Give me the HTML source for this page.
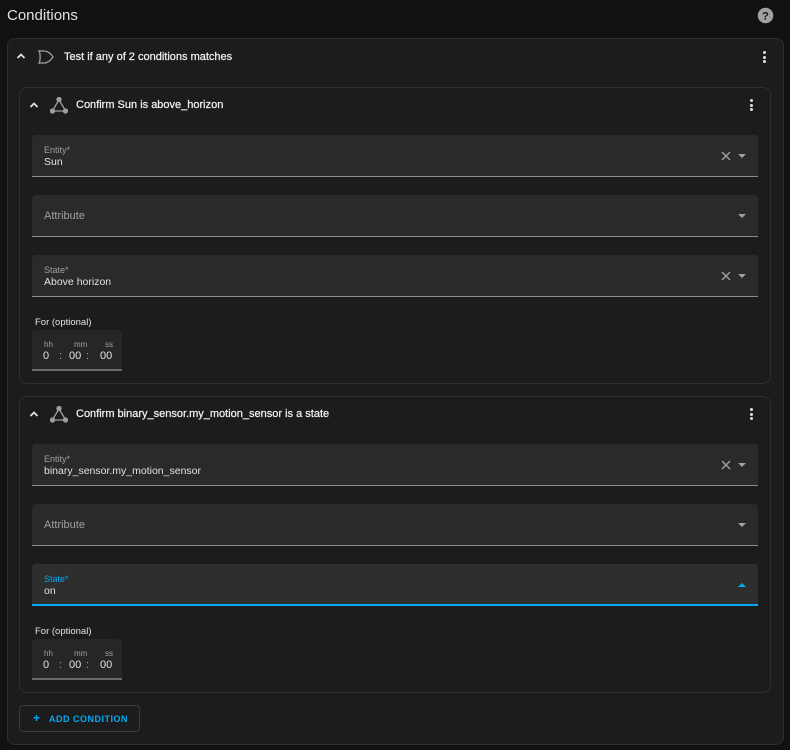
<!DOCTYPE html>
<html><head><meta charset="utf-8"><style>
*{box-sizing:border-box;margin:0;padding:0}
body{width:790px;height:750px;background:#111111;font-family:"Liberation Sans",sans-serif;color:#e1e1e1;position:relative;overflow:hidden}
.a{position:absolute}
.card{position:absolute;background:#1c1c1c;border:1px solid #2f2f2f;border-radius:8px}
.field{position:absolute;left:32px;width:726px;height:42px;background:#2a2a2a;border-radius:4px 4px 0 0;border-bottom:1px solid #8c8c8c}
.lbl{position:absolute;left:12px;top:10px;font-size:9px;color:#a0a0a0}
.val{position:absolute;left:12px;top:21px;font-size:10.5px;color:#e1e1e1}
.ph{position:absolute;left:12px;top:15px;font-size:11px;color:#a0a0a0}
.tri{position:absolute;right:12px;top:19px;width:0;height:0;border-left:4px solid transparent;border-right:4px solid transparent;border-top:4px solid #a0a0a0}
.x{position:absolute;right:27px;top:16px}
.title{position:absolute;font-size:11px;color:#f0f0f0;-webkit-text-stroke:0.25px #f0f0f0}
.dots{position:absolute;width:3px}
.dots i{display:block;width:3px;height:3px;background:#e1e1e1;border-radius:50%;margin-bottom:1.5px}
.dur{position:absolute;left:32px;width:90px;height:41px;background:#262626;border-bottom:2px solid #6a6a6a;border-radius:4px 4px 0 0}
.dur span{position:absolute}
.sm{font-size:8px;color:#a0a0a0;top:10px}
.big{font-size:11px;color:#e1e1e1;top:20px}
</style></head><body>
<div class="a" style="left:7px;top:7px;font-size:15px;color:#e1e1e1">Conditions</div>
<svg class="a" style="left:757px;top:7px" width="17" height="17" viewBox="0 0 24 24"><circle cx="12" cy="12" r="11" fill="#a0a0a0"/><text x="12" y="17.5" text-anchor="middle" font-family="Liberation Sans" font-weight="bold" font-size="16" fill="#111">?</text></svg>

<div class="card" style="left:7px;top:38px;width:777px;height:707px"></div>
<svg class="a" style="left:16px;top:52px" width="10" height="8" viewBox="0 0 10 8"><path d="M1.5 6L5 2.5 8.5 6" stroke="#e1e1e1" stroke-width="1.8" fill="none"/></svg>
<svg class="a" style="left:38px;top:50px" width="16" height="14" viewBox="0 0 16 14"><path d="M1 1h5c4 0 7 3 9 6-2 3-5 6-9 6H1c1.5-2 1.5-10 0-12z" stroke="#a0a0a0" stroke-width="1.3" fill="none"/></svg>
<div class="title" style="left:64px;top:51px">Test if any of 2 conditions matches</div>
<div class="dots" style="left:763px;top:51px"><i></i><i></i><i></i></div>

<!-- card 1 -->
<div class="card" style="left:19px;top:87px;width:752px;height:297px"></div>
<svg class="a" style="left:29px;top:101px" width="10" height="8" viewBox="0 0 10 8"><path d="M1.5 6L5 2.5 8.5 6" stroke="#e1e1e1" stroke-width="1.8" fill="none"/></svg>
<svg class="a" style="left:50px;top:97px" width="18" height="17" viewBox="0 0 18 17"><g fill="#9e9e9e" stroke="#9e9e9e" stroke-width="1.3"><circle cx="9" cy="2.5" r="2"/><circle cx="2.5" cy="14" r="2"/><circle cx="15.5" cy="14" r="2"/><path d="M8 4.5L3.5 12M10 4.5l4.5 7.5M4.5 14h9" fill="none"/></g></svg>
<div class="title" style="left:76px;top:99px">Confirm Sun is above_horizon</div>
<div class="dots" style="left:750px;top:99px"><i></i><i></i><i></i></div>

<div class="field" style="top:135px"><div class="lbl">Entity*</div><div class="val">Sun</div>
<svg class="x" width="10" height="10" viewBox="0 0 10 10"><path d="M1 1l8 8M9 1L1 9" stroke="#a0a0a0" stroke-width="1.4"/></svg><div class="tri"></div></div>
<div class="field" style="top:195px"><div class="ph">Attribute</div><div class="tri"></div></div>
<div class="field" style="top:255px"><div class="lbl">State*</div><div class="val">Above horizon</div>
<svg class="x" width="10" height="10" viewBox="0 0 10 10"><path d="M1 1l8 8M9 1L1 9" stroke="#a0a0a0" stroke-width="1.4"/></svg><div class="tri"></div></div>
<div class="a" style="left:35px;top:317px;font-size:9.5px;color:#e1e1e1">For (optional)</div>
<div class="dur" style="top:330px"><span class="sm" style="left:12px">hh</span><span class="sm" style="left:42px">mm</span><span class="sm" style="left:73px">ss</span>
<span class="big" style="left:11px">0</span><span class="big" style="left:27px;color:#a0a0a0">:</span><span class="big" style="left:37px">00</span><span class="big" style="left:54px;color:#a0a0a0">:</span><span class="big" style="left:68px">00</span></div>

<!-- card 2 -->
<div class="card" style="left:19px;top:396px;width:752px;height:297px"></div>
<svg class="a" style="left:29px;top:410px" width="10" height="8" viewBox="0 0 10 8"><path d="M1.5 6L5 2.5 8.5 6" stroke="#e1e1e1" stroke-width="1.8" fill="none"/></svg>
<svg class="a" style="left:50px;top:406px" width="18" height="17" viewBox="0 0 18 17"><g fill="#9e9e9e" stroke="#9e9e9e" stroke-width="1.3"><circle cx="9" cy="2.5" r="2"/><circle cx="2.5" cy="14" r="2"/><circle cx="15.5" cy="14" r="2"/><path d="M8 4.5L3.5 12M10 4.5l4.5 7.5M4.5 14h9" fill="none"/></g></svg>
<div class="title" style="left:76px;top:408px">Confirm binary_sensor.my_motion_sensor is a state</div>
<div class="dots" style="left:750px;top:408px"><i></i><i></i><i></i></div>

<div class="field" style="top:444px"><div class="lbl">Entity*</div><div class="val">binary_sensor.my_motion_sensor</div>
<svg class="x" width="10" height="10" viewBox="0 0 10 10"><path d="M1 1l8 8M9 1L1 9" stroke="#a0a0a0" stroke-width="1.4"/></svg><div class="tri"></div></div>
<div class="field" style="top:504px"><div class="ph">Attribute</div><div class="tri"></div></div>
<div class="field" style="top:564px;background:#2e2e2e;border-bottom:2px solid #03a9f4"><div class="lbl" style="color:#03a9f4">State*</div><div class="val">on</div>
<div class="tri" style="border-top:none;border-bottom:4px solid #03a9f4"></div></div>
<div class="a" style="left:35px;top:626px;font-size:9.5px;color:#e1e1e1">For (optional)</div>
<div class="dur" style="top:639px"><span class="sm" style="left:12px">hh</span><span class="sm" style="left:42px">mm</span><span class="sm" style="left:73px">ss</span>
<span class="big" style="left:11px">0</span><span class="big" style="left:27px;color:#a0a0a0">:</span><span class="big" style="left:37px">00</span><span class="big" style="left:54px;color:#a0a0a0">:</span><span class="big" style="left:68px">00</span></div>

<div class="a" style="left:19px;top:705px;width:121px;height:27px;border:1px solid #3a3a3a;border-radius:4px"></div>
<div class="a" style="left:33px;top:711px;font-size:12px;color:#03a9f4;font-weight:bold">+</div>
<div class="a" style="left:49px;top:714px;font-size:9px;color:#03a9f4;font-weight:bold;letter-spacing:0.5px">ADD CONDITION</div>
</body></html>
